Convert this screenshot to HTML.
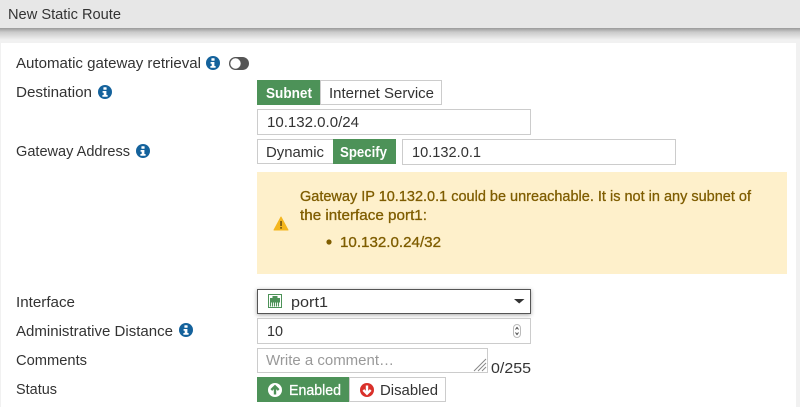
<!DOCTYPE html>
<html><head><meta charset="utf-8"><style>
html,body{margin:0;padding:0;width:800px;height:407px;overflow:hidden;background:#f1f1f1}
svg{display:block;position:absolute;left:0;top:0}
text{font-family:"Liberation Sans",sans-serif;font-size:15px;fill:#333}
.w{fill:#fff;font-weight:bold}
.y{fill:#7f5d00;stroke:#7f5d00;stroke-width:.3px}
</style></head><body>
<svg width="800" height="407" viewBox="0 0 800 407">
<defs>
<linearGradient id="sh" x1="0" y1="0" x2="0" y2="1"><stop offset="0" stop-color="#9a9a9a"/><stop offset=".35" stop-color="#cbcbcb"/><stop offset="1" stop-color="#f1f1f1"/></linearGradient>
<g id="i"><circle r="7" fill="#14629c"/><rect x="-1.6" y="-4.8" width="3.2" height="2.6" rx=".6" fill="#fff"/><path d="M-2.4-1H1.4V3H2.6V4.8H-2.6V3H-1.3V.8H-2.4Z" fill="#fff"/></g>
</defs>
<rect width="800" height="28" fill="#e7e7e7"/>
<rect y="28" width="800" height="12" fill="url(#sh)"/>
<rect x="1" y="43" width="795" height="364" fill="#fff"/>
<text x="8" y="19" textLength="113" lengthAdjust="spacingAndGlyphs">New Static Route</text>
<text x="16" y="68" textLength="185" lengthAdjust="spacingAndGlyphs">Automatic gateway retrieval</text>
<text x="16" y="97" textLength="76" lengthAdjust="spacingAndGlyphs">Destination</text>
<text x="16" y="156" textLength="114" lengthAdjust="spacingAndGlyphs">Gateway Address</text>
<text x="16" y="307" textLength="59" lengthAdjust="spacingAndGlyphs">Interface</text>
<text x="16" y="336" textLength="157" lengthAdjust="spacingAndGlyphs">Administrative Distance</text>
<text x="16" y="365" textLength="71" lengthAdjust="spacingAndGlyphs">Comments</text>
<text x="16" y="394" textLength="41" lengthAdjust="spacingAndGlyphs">Status</text>
<use href="#i" x="213" y="63"/><use href="#i" x="105" y="92"/><use href="#i" x="143" y="151"/><use href="#i" x="186" y="330"/>
<rect x="229" y="57" width="20" height="13" rx="6.5" fill="#555"/><circle cx="235.5" cy="63.5" r="5.2" fill="#fff"/>
<rect x="257" y="80" width="63" height="25" fill="#4d9258"/>
<text class="w" x="266" y="98" textLength="46" lengthAdjust="spacingAndGlyphs">Subnet</text>
<rect x="320.500" y="80.500" width="121" height="24" fill="#fff" stroke="#ccc"/>
<text x="329" y="98" textLength="105" lengthAdjust="spacingAndGlyphs">Internet Service</text>
<rect x="257.500" y="109.500" width="273" height="25" fill="#fff" stroke="#ccc"/>
<text x="267" y="127" textLength="92" lengthAdjust="spacingAndGlyphs">10.132.0.0/24</text>
<rect x="257.500" y="139.500" width="76" height="24" fill="#fff" stroke="#ccc"/>
<text x="266" y="157" textLength="58" lengthAdjust="spacingAndGlyphs">Dynamic</text>
<rect x="333" y="139" width="63" height="25" fill="#4d9258"/>
<text class="w" x="340" y="157" textLength="47" lengthAdjust="spacingAndGlyphs">Specify</text>
<rect x="402.500" y="139.500" width="273" height="25" fill="#fff" stroke="#ccc"/>
<text x="412" y="157" textLength="69" lengthAdjust="spacingAndGlyphs">10.132.0.1</text>
<rect x="257" y="172" width="530" height="102" fill="#fef0cb"/>
<text class="y" x="300" y="201" textLength="451" lengthAdjust="spacingAndGlyphs">Gateway IP 10.132.0.1 could be unreachable. It is not in any subnet of</text>
<text class="y" x="300" y="220" textLength="127" lengthAdjust="spacingAndGlyphs">the interface port1:</text>
<circle cx="329" cy="242" r="2.6" fill="#7f5d00"/>
<text class="y" x="340" y="247" textLength="101" lengthAdjust="spacingAndGlyphs">10.132.0.24/32</text>
<path d="M281 217L288 230H274Z" fill="#f4b61e" stroke="#f4b61e" stroke-linejoin="round"/>
<rect x="280.200" y="221" width="1.700" height="5" fill="#7a5a10"/><rect x="280.200" y="227" width="1.700" height="1.700" fill="#7a5a10"/>
<rect x="257.500" y="289.500" width="273" height="24" fill="#fff" stroke="#555" style="filter:drop-shadow(0 1px 2px rgba(0,0,0,.35))"/>
<rect x="268.500" y="294.500" width="13" height="13" fill="#fff" stroke="#4d9258"/>
<path d="M272.500 296H277.500V298H280V302.500H270V298H272.500Z" fill="#4d9258"/>
<path d="M270.500 302V306.500M272.500 302V306.500M274.500 302V306.500M276.500 302V306.500M278.500 302V306.500" stroke="#4d9258" stroke-width="1.100"/>
<text x="291" y="307" textLength="37" lengthAdjust="spacingAndGlyphs">port1</text>
<path d="M514 299H524.500L519.200 303.500Z" fill="#333"/>
<rect x="257.500" y="318.500" width="273" height="25" fill="#fff" stroke="#ccc"/>
<text x="267" y="336" textLength="16" lengthAdjust="spacingAndGlyphs">10</text>
<rect x="513.500" y="324.500" width="7" height="13" rx="3.500" fill="#fff" stroke="#bbb"/>
<path d="M515.500 329.500L517 327.500L518.500 329.500M515.500 332.500L517 334.500L518.500 332.500" fill="none" stroke="#444"/>
<rect x="257.500" y="348.500" width="230" height="24" fill="#fff" stroke="#ccc"/>
<text x="266" y="365" textLength="128" lengthAdjust="spacingAndGlyphs" style="fill:#999">Write a comment…</text>
<path d="M474 371L486 359M478 371L486 363M482 371L486 367" stroke="#888" stroke-width="1"/>
<text x="491" y="373" textLength="40" lengthAdjust="spacingAndGlyphs">0/255</text>
<rect x="257" y="377" width="92" height="25" fill="#4d9258"/>
<circle cx="275" cy="390" r="7" fill="#fff"/>
<path d="M275 394.500V386.500M271.300 390L275 386.300L278.700 390" fill="none" stroke="#4d9258" stroke-width="2.400"/>
<text x="289" y="395" textLength="52" lengthAdjust="spacingAndGlyphs" style="fill:#fff;stroke:#fff;stroke-width:.3px">Enabled</text>
<rect x="349.500" y="377.500" width="96" height="24" fill="#fff" stroke="#ccc"/>
<circle cx="367" cy="390" r="7" fill="#d9302a"/>
<path d="M367 385.500V393.500M363.300 390L367 393.700L370.700 390" fill="none" stroke="#fff" stroke-width="2.400"/>
<text x="380" y="395" textLength="58" lengthAdjust="spacingAndGlyphs">Disabled</text>
</svg>
</body></html>
